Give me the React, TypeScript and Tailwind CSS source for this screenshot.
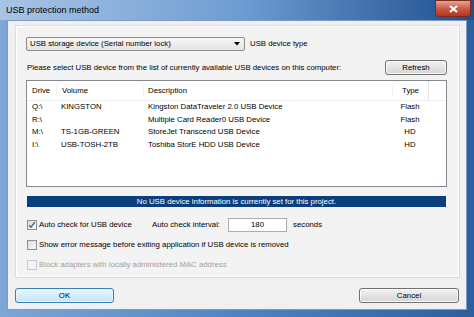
import React from 'react';

interface UsbDevice {
  drive: string;
  volume: string;
  description: string;
  type: string;
}

const DEVICES: UsbDevice[] = [
  { drive: 'Q:\\', volume: 'KINGSTON', description: 'Kingston DataTraveler 2.0 USB Device', type: 'Flash' },
  { drive: 'R:\\', volume: '', description: 'Multiple Card Reader0 USB Device', type: 'Flash' },
  { drive: 'M:\\', volume: 'TS-1GB-GREEN', description: 'StoreJet Transcend USB Device', type: 'HD' },
  { drive: 'I:\\', volume: 'USB-TOSH-2TB', description: 'Toshiba StorE HDD USB Device', type: 'HD' },
];

function CheckBox({ checked, disabled }: { checked?: boolean; disabled?: boolean }) {
  return (
    <span
      className={
        'w-[10px] h-[10px] border flex items-center justify-center shrink-0 ' +
        (disabled
          ? 'border-[#c8c8c8] bg-[#f4f4f4]'
          : 'border-[#8e8f8f] bg-gradient-to-br from-[#dcdcdc] to-[#fbfbfb]')
      }
    >
      {checked && (
        <svg width="8" height="8" viewBox="0 0 8 8">
          <path d="M1.2 4.2 L3 6.2 L6.8 1.2" fill="none" stroke="#4a5f97" strokeWidth="1.4" />
        </svg>
      )}
    </span>
  );
}

function WinButton({ label, primary, className }: { label: string; primary?: boolean; className: string }) {
  return (
    <div
      className={
        'flex items-center justify-center rounded-[3px] border text-[7.8px] text-black ' +
        (primary
          ? 'border-[#3c7fb1] bg-gradient-to-b from-[#eaf6fd] to-[#bee6fd] shadow-[inset_0_0_0_1px_#e6f3fb] '
          : 'border-[#707070] bg-gradient-to-b from-[#f2f2f2] to-[#d5d5d5] shadow-[inset_0_0_0_1px_#fbfbfb] ') +
        className
      }
    >
      {label}
    </div>
  );
}

export default function App() {
  return (
    <div className="w-[474px] h-[317px] flex flex-col overflow-hidden bg-gradient-to-r from-[#7fa6d6] via-[#4f84c4] to-[#2d5f9f] font-['Liberation_Sans',Arial,sans-serif] text-black">
      {/* title bar */}
      <div className="h-[20px] relative flex items-center px-[6px] bg-gradient-to-r from-[#a9c4e4] via-[#6f9dd3] to-[#1f4f8f]">
        <span className="text-[9px] text-black leading-none">USB protection method</span>
        <div className="absolute right-[3px] top-0 w-[36px] h-[17px] rounded-b-[4px] border border-[#7a2a1e] bg-gradient-to-b from-[#e3a595] via-[#cc5a44] to-[#b3351f] flex items-center justify-center">
          <svg width="9" height="8" viewBox="0 0 9 8">
            <path d="M1 1 L8 7 M8 1 L1 7" stroke="#ffffff" strokeWidth="2" />
          </svg>
        </div>
      </div>

      {/* client area */}
      <div className="flex-1 mx-[7px] mb-[7px] bg-[#f0f0f0] border border-[#7c9ac0] flex flex-col">
        <div className="mt-[4px] ml-[7px] mr-[6px] h-[253px] bg-[#f3f3f3] border border-[#dcdcdc] shadow-[inset_0_0_0_1px_#ffffff] px-[10px] flex flex-col text-[7.8px]">
          {/* combo */}
          <div className="mt-[11px] flex items-center">
            <div className="w-[219px] h-[14px] border border-[#8c8c8c] rounded-[2px] bg-gradient-to-b from-[#f7f7f7] to-[#e4e4e4] flex items-center pl-[3px] pr-[4px]">
              <span className="flex-1">USB storage device (Serial number lock)</span>
              <svg width="6" height="4" viewBox="0 0 6 4">
                <path d="M0 0 L6 0 L3 3.5 Z" fill="#000000" />
              </svg>
            </div>
            <span className="ml-[5px]">USB device type</span>
          </div>

          {/* label + refresh */}
          <div className="mt-[9px] flex items-center justify-between mr-[2px]">
            <span className="ml-[1px]">Please select USB device from the list of currently available USB devices on this computer:</span>
            <WinButton label="Refresh" className="w-[62px] h-[15px]" />
          </div>

          {/* list view */}
          <div className="mt-[5px] h-[107px] mr-[2px] bg-white border border-[#828790]">
            <div className="h-[20px] flex items-center border-b border-[#f0f0f0]">
              <span className="w-[29px] pl-[5px]">Drive</span>
              <span className="w-[87px] pl-[5px] border-l border-[#f3f3f3]">Volume</span>
              <span className="w-[249px] pl-[4px] border-l border-[#f3f3f3]">Description</span>
              <span className="w-[36px] text-center border-l border-[#f3f3f3]">Type</span>
              <span className="h-full border-l border-[#e3e3e3]" />
            </div>
            {DEVICES.map((d) => (
              <div key={d.drive} className="h-[12.5px] flex items-center">
                <span className="w-[29px] pl-[5px]">{d.drive}</span>
                <span className="w-[87px] pl-[5px]">{d.volume}</span>
                <span className="w-[249px] pl-[5px]">{d.description}</span>
                <span className="w-[36px] text-center">{d.type}</span>
              </div>
            ))}
          </div>

          {/* status banner */}
          <div className="mt-[9px] mx-[1px] mr-[3px] h-[11px] bg-[#0a3e7c] text-white flex items-center justify-center">
            No USB device information is currently set for this project.
          </div>

          {/* options */}
          <div className="mt-[11px] h-[14px] flex items-center ml-[1px]">
            <CheckBox checked />
            <span className="ml-[2px] w-[113px]">Auto check for USB device</span>
            <span className="w-[76px]">Auto check interval:</span>
            <div className="w-[59px] h-[14px] bg-white border border-[#abadb3] flex items-center justify-center">180</div>
            <span className="ml-[6px]">seconds</span>
          </div>
          <div className="mt-[6px] h-[14px] flex items-center ml-[1px]">
            <CheckBox />
            <span className="ml-[2px]">Show error message before exiting application if USB device is removed</span>
          </div>
          <div className="mt-[6px] h-[14px] flex items-center ml-[1px] text-[#a0a0a0]">
            <CheckBox disabled />
            <span className="ml-[2px]">Block adapters with locally administered MAC address</span>
          </div>
        </div>

        {/* dialog buttons */}
        <div className="mt-[10px] flex justify-between pl-[7px] pr-[7px]">
          <WinButton label="OK" primary className="w-[99px] h-[15px]" />
          <WinButton label="Cancel" className="w-[100px] h-[15px]" />
        </div>
      </div>
    </div>
  );
}
